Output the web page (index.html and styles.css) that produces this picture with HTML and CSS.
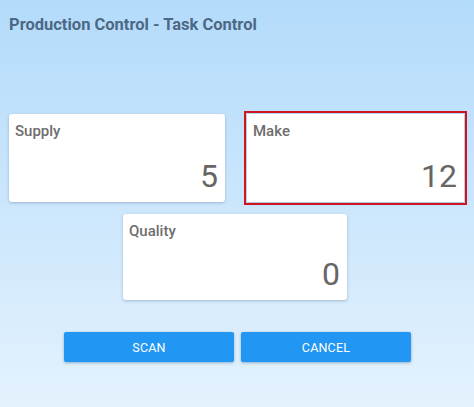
FILE: index.html
```html
<!DOCTYPE html>
<html>
<head>
<meta charset="utf-8">
<link rel="stylesheet" href="styles.css">
</head>
<body>
<div class="page">
  <h1 class="title">Production Control - Task Control</h1>
  <div class="row row-top">
    <div class="card card-supply">
      <div class="label">Supply</div>
      <div class="value">5</div>
    </div>
    <div class="card card-make selected">
      <div class="label">Make</div>
      <div class="value">12</div>
    </div>
  </div>
  <div class="row row-mid">
    <div class="card card-quality">
      <div class="label">Quality</div>
      <div class="value">0</div>
    </div>
  </div>
  <div class="row row-buttons">
    <button class="btn">SCAN</button>
    <button class="btn">CANCEL</button>
  </div>
</div>
</body>
</html>
```
FILE: styles.css
```css
html, body {
  margin: 0;
  padding: 0;
}
body {
  width: 474px;
  height: 407px;
  overflow: hidden;
  background: linear-gradient(180deg, #b3dbfa 0%, #c9e5fc 45%, #e4f2fd 100%);
  font-family: Roboto, "Liberation Sans", sans-serif;
}
.page {
  display: flex;
  flex-direction: column;
  height: 407px;
}
.title {
  margin: 0;
  padding: 15px 0 0 9px;
  font-size: 16.5px;
  line-height: 20px;
  font-weight: 700;
  color: #4d6884;
}
.row {
  display: flex;
}
.row-top {
  margin-top: 79px;
  padding-left: 9px;
  gap: 22px;
}
.row-mid {
  margin-top: 12px;
  padding-left: 123px;
}
.row-buttons {
  margin-top: 32px;
  padding-left: 64px;
  gap: 7px;
}
.card {
  background: #ffffff;
  border-radius: 3px;
  box-shadow: 0 1px 3px rgba(60, 90, 120, 0.35);
  height: 88px;
  box-sizing: border-box;
  padding: 8px 7px 10px 6px;
  display: flex;
  flex-direction: column;
  justify-content: space-between;
}
.card-supply { width: 216px; }
.card-make { width: 217px; }
.card-quality { width: 224px; height: 86px; }
.selected {
  border-radius: 0;
  outline: 2px solid #d0141e;
  outline-offset: 1px;
}
.label {
  font-size: 15px;
  line-height: 18px;
  font-weight: 500;
  color: #6e6e6e;
}
.value {
  font-size: 32px;
  line-height: 32px;
  font-weight: 400;
  color: #666666;
  text-align: right;
}
.btn {
  width: 170px;
  height: 30px;
  border: none;
  border-radius: 2px;
  background: #2196f3;
  color: #ffffff;
  font-family: Roboto, "Liberation Sans", sans-serif;
  font-size: 12.5px;
  font-weight: 400;
  letter-spacing: 0.2px;
  box-shadow: 0 1px 3px rgba(30, 80, 130, 0.4);
  padding: 0;
}
```
